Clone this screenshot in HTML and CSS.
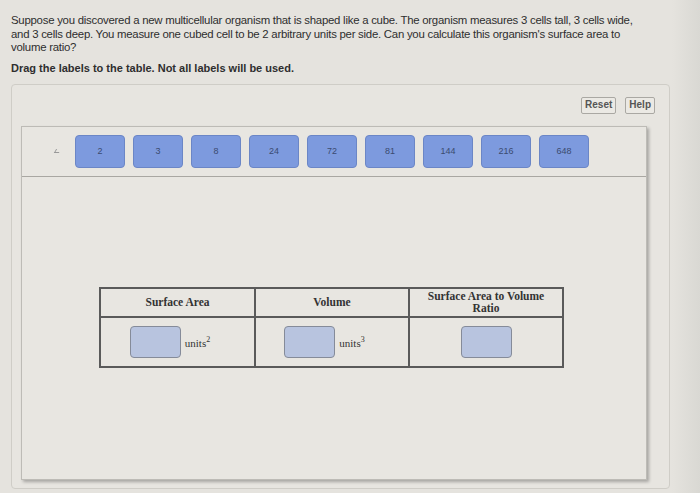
FILE: index.html
```html
<!DOCTYPE html>
<html lang="en">
<head>
  <meta charset="UTF-8">
  <title>Surface Area to Volume</title>
  <link rel="stylesheet" href="styles.css">
</head>
<body>
  <div class="question">
    <p class="prompt">Suppose you discovered a new multicellular organism that is shaped like a cube. The organism measures 3 cells tall, 3 cells wide, and 3 cells deep. You measure one cubed cell to be 2 arbitrary units per side. Can you calculate this organism's surface area to volume ratio?</p>
    <p class="instructions">Drag the labels to the table. Not all labels will be used.</p>
  </div>

  <div class="activity">
    <div class="toolbar">
      <button type="button" class="tool-btn">Reset</button>
      <button type="button" class="tool-btn">Help</button>
    </div>

    <div class="workspace">
      <div class="label-bank">
        <span class="speck"></span>
        <div class="chip">2</div>
        <div class="chip">3</div>
        <div class="chip">8</div>
        <div class="chip">24</div>
        <div class="chip">72</div>
        <div class="chip">81</div>
        <div class="chip">144</div>
        <div class="chip">216</div>
        <div class="chip">648</div>
      </div>

      <div class="board">
        <table class="answer-table">
          <tr>
            <th class="col-1">Surface Area</th>
            <th>Volume</th>
            <th>Surface Area to Volume Ratio</th>
          </tr>
          <tr>
            <td><div class="slot"><div class="drop"></div><span class="unit">units<sup>2</sup></span></div></td>
            <td><div class="slot"><div class="drop"></div><span class="unit">units<sup>3</sup></span></div></td>
            <td><div class="slot"><div class="drop"></div></div></td>
          </tr>
        </table>
      </div>
    </div>
  </div>
</body>
</html>
```

FILE: styles.css
```css
:root {
  --page-bg: #e5e3de;
  --panel-bg: #e7e5e0;
  --text: #2e2e2e;
  --chip: #7d9ade;
  --chip-text: #3b4a70;
  --drop: #b8c4df;
  --rule: #5a5a5a;
}
body {
  margin: 0;
  background: linear-gradient(to right, var(--page-bg) 96%, #d9d8d3);
  color: var(--text);
  font-family: 'Liberation Sans', Arial, sans-serif;
  height: 493px;
  overflow: hidden;
}
.question {
  padding: 14px 0 0 11px;
}
.prompt {
  margin: 0;
  width: 640px;
  font-size: 11.4px;
  line-height: 13.6px;
  letter-spacing: -0.25px;
}
.instructions {
  margin: 7px 0 0 0;
  font-size: 11px;
  font-weight: 700;
}
.activity {
  margin: 10px 0 0 11px;
  width: 659px;
  height: 405px;
  border: 1px solid #cfcdc7;
  border-radius: 4px;
  background: var(--panel-bg);
  padding: 12px 0 0 0;
  box-sizing: border-box;
}
.toolbar {
  display: flex;
  justify-content: flex-end;
  gap: 9px;
  padding-right: 14px;
}
.tool-btn {
  font-family: 'Liberation Sans', Arial, sans-serif;
  font-size: 10px;
  font-weight: 700;
  color: #555;
  background: #ebe9e4;
  border: 1px solid #aaa8a3;
  border-radius: 2px;
  height: 17px;
  padding: 0 3px;
  line-height: 14px;
}
.workspace {
  margin: 12px 0 0 9px;
  width: 626px;
  height: 354px;
  border: 1px solid #bdbbb6;
  background: #e8e6e1;
  box-shadow: 2px 2px 3px rgba(0, 0, 0, .28);
  box-sizing: border-box;
}
.label-bank {
  display: flex;
  align-items: center;
  gap: 8px;
  height: 49px;
  padding-left: 53px;
  border-bottom: 1px solid #a9a7a2;
  position: relative;
}
.speck {
  position: absolute;
  left: 33px;
  top: 22px;
  width: 4px;
  height: 3px;
  border-left: 1px solid #999;
  border-bottom: 1px solid #999;
  transform: skewX(-30deg);
}
.chip {
  width: 50px;
  height: 33px;
  background: var(--chip);
  border: 1px solid #6b86c6;
  border-radius: 4px;
  color: var(--chip-text);
  font-size: 9px;
  display: flex;
  align-items: center;
  justify-content: center;
  box-sizing: border-box;
}
.board {
  padding: 110px 0 0 77px;
}
.answer-table {
  border-collapse: collapse;
  font-family: 'Liberation Serif', 'Times New Roman', serif;
  color: #333;
}
.answer-table th,
.answer-table td {
  border: 2px solid var(--rule);
  width: 152px;
  padding: 0;
  text-align: center;
}
.answer-table .col-1 {
  width: 155px;
}
.answer-table th {
  height: 29px;
  font-size: 11.5px;
  line-height: 12.5px;
  padding: 0 16px;
  box-sizing: border-box;
}
.answer-table td {
  height: 48px;
}
.slot {
  display: flex;
  align-items: center;
  justify-content: center;
  gap: 4px;
}
.drop {
  width: 51px;
  height: 32px;
  background: var(--drop);
  border: 1px solid #858b99;
  border-radius: 4px;
  box-sizing: border-box;
}
.unit {
  font-size: 11px;
  margin-right: 15px;
}
.unit sup {
  font-size: 8px;
}
```
